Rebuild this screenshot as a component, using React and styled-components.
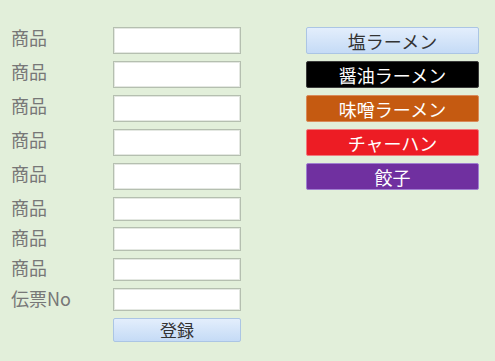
import React from 'react';
import styled, { createGlobalStyle } from 'styled-components';

const Global = createGlobalStyle`
  html, body {
    margin: 0;
    padding: 0;
    background: #e2efda;
  }
  body {
    font-family: "Noto Sans CJK JP", "Noto Sans", sans-serif;
  }
`;

const Page = styled.div`
  width: 495px;
  height: 361px;
  box-sizing: border-box;
  padding: 26px 0 0 11px;
  display: flex;
  align-items: flex-start;
  background: #e2efda;
`;

const Form = styled.div`
  display: flex;
  flex-direction: column;
  width: 230px;
`;

const Row = styled.div`
  display: grid;
  grid-template-columns: 102px 128px;
  align-items: center;
  height: ${p => p.$h}px;
  margin-top: ${p => p.$gap}px;
`;

const Label = styled.span`
  font-size: 18px;
  line-height: 1;
  color: #777;
  transform: translateY(${p => p.$shift || 0}px);
  white-space: nowrap;
`;

const Field = styled.input`
  box-sizing: border-box;
  width: 128px;
  height: 100%;
  margin: 0;
  padding: 0 4px;
  background: #fff;
  border: 1px solid #b5bfb0;
  box-shadow: inset 0 0 0 1px #e4e8e2;
  outline: none;
`;

const Submit = styled.button`
  grid-column: 2;
  box-sizing: border-box;
  width: 128px;
  height: 100%;
  margin: 0;
  padding: 0;
  font-family: inherit;
  font-size: 17px;
  line-height: 1;
  color: #333;
  background: linear-gradient(#e3eefc, #c5dbf6);
  border: 1px solid #abc5e4;
  border-radius: 2px;
`;

const Menu = styled.div`
  display: flex;
  flex-direction: column;
  gap: 7px;
  margin-left: 65px;
  margin-top: 1px;
`;

const MenuButton = styled.button`
  box-sizing: border-box;
  width: 173px;
  height: 27px;
  margin: 0;
  padding: 0;
  font-family: inherit;
  font-size: 18px;
  line-height: 1;
  color: ${p => p.$fg};
  background: ${p => p.$bg};
  border: 1px solid ${p => p.$border};
  border-radius: 2px;
`;

const menu = [
  { name: '塩ラーメン', bg: 'linear-gradient(#e3eefc, #c5dbf6)', fg: '#333', border: '#abc5e4' },
  { name: '醤油ラーメン', bg: '#000', fg: '#fff', border: '#3a3a3a' },
  { name: '味噌ラーメン', bg: '#c55a11', fg: '#fff', border: '#d98a5a' },
  { name: 'チャーハン', bg: '#ed1c24', fg: '#fff', border: '#f07a7e' },
  { name: '餃子', bg: '#7030a0', fg: '#fff', border: '#a080d0' },
];

export default function App() {
  const tall = [0, 1, 2, 3, 4];
  const short = ['商品', '商品', '商品', '伝票No'];
  return (
    <>
      <Global />
      <Page>
        <Form>
          {tall.map(i => (
            <Row key={'t' + i} $h={27} $gap={i === 0 ? 1 : 7}>
              <Label $shift={-4}>商品</Label>
              <Field />
            </Row>
          ))}
          {short.map((l, i) => (
            <Row key={'s' + i} $h={23.5} $gap={i === 0 ? 7 : 6.8}>
              <Label $shift={-2}>{l}</Label>
              <Field />
            </Row>
          ))}
          <Row $h={24} $gap={6.5}>
            <Submit>登録</Submit>
          </Row>
        </Form>
        <Menu>
          {menu.map(m => (
            <MenuButton key={m.name} $bg={m.bg} $fg={m.fg} $border={m.border}>
              {m.name}
            </MenuButton>
          ))}
        </Menu>
      </Page>
    </>
  );
}
